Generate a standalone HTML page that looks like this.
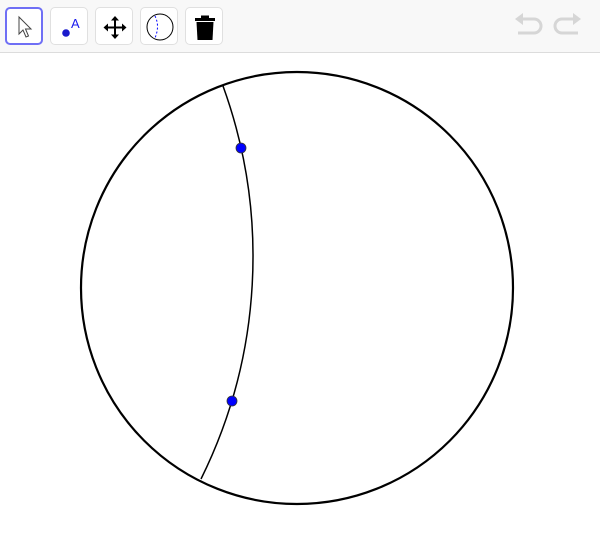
<!DOCTYPE html>
<html><head><style>
body{margin:0;width:600px;height:550px;background:#fff;overflow:hidden;font-family:"Liberation Sans",sans-serif;position:relative}
.tb{position:absolute;left:0;top:0;width:600px;height:52px;background:#f8f8f8;border-bottom:1px solid #dcdcdc}
.b{position:absolute;top:7px;width:38px;height:38px;border:1px solid #e0e0e0;border-radius:5px;background:#fff;box-sizing:border-box}
.b svg{position:absolute;left:0;top:0}
</style></head><body>
<div class="tb">
<div class="b" style="left:5px;border:2px solid #6f6ff5"><svg width="34" height="34"><path d="M12 8 L12 25 L16 21 L19 28 L21.5 27 L18.5 20 L24 20 Z" fill="#fff" stroke="#444" stroke-width="1"/></svg></div>
<div class="b" style="left:50px"><svg width="38" height="38"><circle cx="15" cy="25" r="3.8" fill="#1a1acc"/><text x="20" y="20" font-size="13" fill="#1a1aee" font-family="Liberation Sans">A</text></svg></div>
<div class="b" style="left:95px"><svg width="38" height="38"><path d="M19 10V29M10 19.5H28" stroke="#000" stroke-width="2"/><path d="M19 8l-4 4.5h8zM19 31l-4-4.5h8zM7.5 19.5l4.5-4v8zM30.5 19.5l-4.5-4v8z" fill="#000"/></svg></div>
<div class="b" style="left:140px"><svg width="38" height="38"><circle cx="19" cy="19" r="13" fill="none" stroke="#000" stroke-width="1"/><path d="M14 8 Q19 18 14 30" fill="none" stroke="#00f" stroke-width="1" stroke-dasharray="2 2"/></svg></div>
<div class="b" style="left:185px"><svg width="38" height="38"><rect x="9" y="10" width="20" height="3" fill="#000"/><rect x="15" y="7.5" width="8" height="3" fill="#000"/><path d="M10.5 14H27.5L26.5 32H11.5Z" fill="#000"/></svg></div>
<svg style="position:absolute;left:510px;top:10px" width="80" height="32"><g fill="none" stroke="#d6d6d6" stroke-width="3"><path d="M10 9H24a7 7 0 0 1 0 14H8"/><path d="M66 9H52a7 7 0 0 0 0 14H68"/></g><path d="M5 9l8-6v12z M71 9l-8-6v12z" fill="#d6d6d6"/></svg>
</div>
<svg style="position:absolute;left:0;top:0" width="600" height="550">
<circle cx="297" cy="288" r="216" fill="none" stroke="#000" stroke-width="2.2"/>
<path d="M223 86 A501 501 0 0 1 201 479" fill="none" stroke="#000" stroke-width="1.5"/>
<circle cx="241" cy="148" r="5" fill="#0000ff" stroke="#333" stroke-width="0.8"/>
<circle cx="232" cy="401" r="5" fill="#0000ff" stroke="#333" stroke-width="0.8"/>
</svg>
</body></html>
